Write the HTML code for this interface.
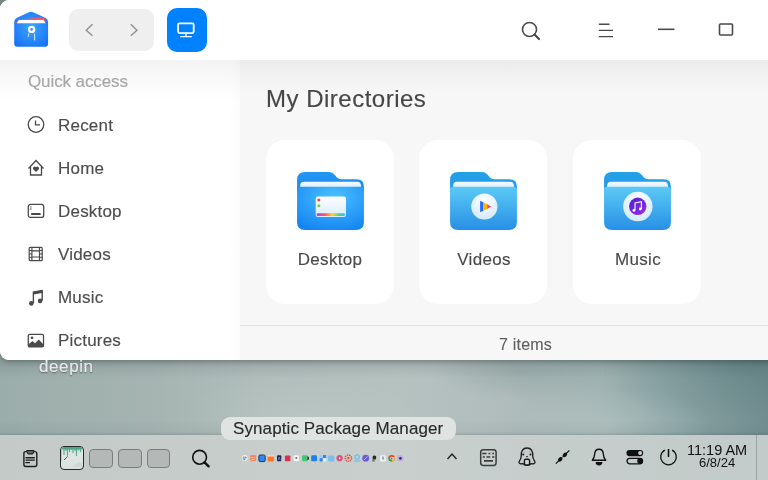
<!DOCTYPE html>
<html><head><meta charset="utf-8">
<style>
*{margin:0;padding:0;box-sizing:border-box}
html,body{width:768px;height:480px;overflow:hidden}
body{position:relative;font-family:"Liberation Sans",sans-serif;
background:
linear-gradient(180deg,rgba(40,60,60,.3) 0,rgba(40,60,60,.12) 365px,rgba(40,60,60,0) 378px,rgba(40,60,60,0) 420px,rgba(40,60,60,.06) 434px) ,
radial-gradient(ellipse 150px 55px at 745px 370px,rgba(80,115,118,.35),rgba(80,115,118,0)),
radial-gradient(ellipse 90px 28px at 520px 372px,rgba(90,120,122,.22),rgba(90,120,122,0)),
radial-gradient(ellipse 100px 40px at 610px 425px,rgba(230,240,238,.2),rgba(230,240,238,0)),
radial-gradient(ellipse 120px 40px at 300px 415px,rgba(230,240,238,.12),rgba(230,240,238,0)),
linear-gradient(90deg,#9badaa 0,#a5b4b1 150px,#b0bdbb 260px,#b6c2c0 400px,#b0bdbc 500px,#a0b3b2 600px,#8aa3a4 680px,#728e90 768px);}
.abs{position:absolute}
svg{position:absolute;overflow:visible}
#win{position:absolute;left:0;top:0;width:790px;height:360px;background:#fff;border-radius:9px;overflow:hidden;box-shadow:0 2px 5px rgba(0,0,0,.28)}
#title{position:absolute;left:0;top:0;width:790px;height:60px;background:#fff}
#side{position:absolute;left:0;top:60px;width:240px;height:300px;background:linear-gradient(90deg,rgba(0,0,0,0) 228px,rgba(0,0,0,.012) 240px),linear-gradient(180deg,#f3f3f3 0,#f9f9f9 18px,#fdfdfd 32px,#fff 46px)}
#main{position:absolute;left:240px;top:60px;width:550px;height:300px;background:linear-gradient(180deg,#ececec 0,#f5f5f5 25px,#f7f7f7 40px)}
.txt{position:absolute;white-space:nowrap;line-height:1;will-change:transform}
.lb{position:absolute;will-change:transform;-webkit-text-stroke:.15px currentColor;left:58px;font-size:17px;color:#4d4d4d;letter-spacing:.2px;line-height:1;white-space:nowrap}
.card{position:absolute;width:128px;height:164px;background:#fff;border-radius:19px}
.card .nm{position:absolute;will-change:transform;-webkit-text-stroke:.15px currentColor;left:.8px;width:128px;text-align:center;top:110.5px;font-size:17px;color:#4a4a4a;line-height:1;letter-spacing:.3px}
#dock{position:absolute;left:0;top:435px;width:768px;height:45px;box-shadow:0 -1px 2px rgba(40,60,60,.18);background:linear-gradient(90deg,#c3cac8,#c8cfcd 50%,#c3cbca)}
.ws{position:absolute;top:449px;width:23.5px;height:18.5px;border:1.6px solid #7a7f7e;border-radius:4px;background:#b4b9b8}
.di{position:absolute;top:454.5px;width:8px;height:8px;border-radius:2px}
</style></head><body>
<svg width="0" height="0" style="position:absolute">
<defs>
<radialGradient id="fd1" cx="0.55" cy="0.25" r="0.8"><stop offset="0" stop-color="#4cc2ff"/><stop offset="0.6" stop-color="#2a9cf8"/><stop offset="1" stop-color="#1586f0"/></radialGradient>
<linearGradient id="fv1" x1="0" y1="0" x2="0" y2="1"><stop offset="0" stop-color="#5ccaf5"/><stop offset="1" stop-color="#2790e6"/></linearGradient>
<linearGradient id="tb1" x1="0" y1="0" x2="0" y2="1"><stop offset="0" stop-color="#2596f2"/><stop offset="1" stop-color="#1a8aee"/></linearGradient>
<linearGradient id="tb2" x1="0" y1="0" x2="0" y2="1"><stop offset="0" stop-color="#22a0e8"/><stop offset="1" stop-color="#2a9be6"/></linearGradient>
<linearGradient id="pp" x1="0" y1="0" x2="0" y2="1"><stop offset="0" stop-color="#f4fbff"/><stop offset="1" stop-color="#cfeaff"/></linearGradient>
<linearGradient id="win" x1="0" y1="0" x2="0" y2="1"><stop offset="0" stop-color="#ffffff"/><stop offset="1" stop-color="#d7ebff"/></linearGradient>
<linearGradient id="rb" x1="0" y1="0" x2="1" y2="0"><stop offset="0" stop-color="#a63cff"/><stop offset="0.3" stop-color="#ff5a5a"/><stop offset="0.55" stop-color="#ffd21a"/><stop offset="0.8" stop-color="#4fd27a"/><stop offset="1" stop-color="#3cb5ff"/></linearGradient>
<radialGradient id="cw" cx="0.5" cy="0.3" r="0.7"><stop offset="0" stop-color="#ffffff"/><stop offset="1" stop-color="#d3e9fb"/></radialGradient>
<linearGradient id="pu" x1="0" y1="0" x2="1" y2="1"><stop offset="0" stop-color="#4a1ed6"/><stop offset="1" stop-color="#9a2ee8"/></linearGradient>
</defs></svg>
<div id="win">
  <div id="title">
    <!-- app icon -->
    <svg style="left:0;top:0" width="60" height="60" viewBox="0 0 60 60">
      <defs><radialGradient id="ag" cx="0.5" cy="0.45" r="0.65"><stop offset="0" stop-color="#3aa6ff"/><stop offset="1" stop-color="#1872f6"/></radialGradient></defs>
      <path d="M14.2 22 Q14.2 19 17 17.8 L29 12.3 Q31 11.4 33 12.3 L45.3 17.8 Q48.1 19 48.1 22 V43.8 Q48.1 46.8 45.1 46.8 H17.2 Q14.2 46.8 14.2 43.8 Z" fill="url(#ag)"/>
      <path d="M16.2 23 L18.5 19.8 L42.5 17.3 Q44 17.2 44.5 18.5 L45.8 23 Z" fill="#ff5470"/>
      <path d="M16.8 23.2 L18.8 20 H43.4 L45.6 23.2 Z" fill="#ffffff"/>
      <circle cx="31.6" cy="29.4" r="3.7" fill="#fff"/><circle cx="31.6" cy="29.4" r="1.3" fill="#2a8cff"/>
      <path d="M28.6 33.6 V36.8 M34.6 33.6 V40.4" stroke="#e8f2ff" stroke-width="0.9" fill="none"/>
    </svg>
    <div class="abs" style="left:69px;top:9px;width:85px;height:42px;background:#efefef;border-radius:9px"></div>
    <svg style="left:83px;top:21px" width="12" height="18" viewBox="0 0 12 18"><path d="M9.5 3.3 L3.2 9.2 L9.5 14.8" stroke="#8f8f8f" stroke-width="1.4" fill="none"/></svg>
    <svg style="left:127px;top:21px" width="12" height="18" viewBox="0 0 12 18"><path d="M3.8 3.3 L10 9.2 L3.8 14.8" stroke="#8f8f8f" stroke-width="1.4" fill="none"/></svg>
    <div class="abs" style="left:167px;top:8px;width:39.5px;height:43.5px;background:#0081ff;border-radius:10px"></div>
    <svg style="left:176px;top:20px" width="20" height="18" viewBox="0 0 20 18">
      <rect x="2.1" y="3.3" width="15.6" height="9.8" rx="1.5" stroke="#fff" stroke-width="1.8" fill="none"/>
      <path d="M10 13 V16 M4.2 16.6 H15.8" stroke="#fff" stroke-width="1.4"/>
    </svg>
    <svg style="left:520px;top:20px" width="22" height="22" viewBox="0 0 22 22"><circle cx="9.5" cy="9.5" r="7" stroke="#4a4a4a" stroke-width="1.6" fill="none"/><path d="M14.5 14.5 L19 19" stroke="#4a4a4a" stroke-width="2.2" stroke-linecap="round"/></svg>
    <svg style="left:596px;top:22px" width="18" height="18" viewBox="0 0 18 18"><path d="M2.8 2.3 H13.5 M2.8 8.4 H17 M2.8 14.6 H17" stroke="#4a4a4a" stroke-width="1.4"/></svg>
    <svg style="left:656px;top:22px" width="20" height="16" viewBox="0 0 20 16"><path d="M2 7.3 H18.4" stroke="#4a4a4a" stroke-width="1.6"/></svg>
    <svg style="left:718px;top:22px" width="18" height="16" viewBox="0 0 18 16"><rect x="1.5" y="2" width="13" height="11" rx="1" stroke="#4a4a4a" stroke-width="1.6" fill="none"/></svg>
  </div>
  <div id="side">
    <div class="txt" style="left:28px;top:13px;font-size:17px;color:#a6a6a6;letter-spacing:-.1px;-webkit-text-stroke:.15px currentColor">Quick access</div>
    <!-- clock -->
    <svg style="left:27px;top:56px" width="18" height="18" viewBox="0 0 18 18"><circle cx="9" cy="8.5" r="7.8" stroke="#4a4a4a" stroke-width="1.3" fill="none"/><path d="M8.5 4.5 V8.8 H13" stroke="#4a4a4a" stroke-width="1.3" fill="none"/></svg>
    <div class="lb" style="top:57px">Recent</div>
    <!-- home -->
    <svg style="left:27px;top:99px" width="18" height="18" viewBox="0 0 18 18"><path d="M1.5 9.5 L9 1.5 L16.5 9.5 M3.5 8 V16 H14.5 V8" stroke="#4a4a4a" stroke-width="1.3" fill="none" stroke-linejoin="miter"/><path d="M9 13 L6.2 10.3 a1.6 1.6 0 0 1 2.8 -2 a1.6 1.6 0 0 1 2.8 2 Z" fill="#4a4a4a"/></svg>
    <div class="lb" style="top:100px">Home</div>
    <!-- desktop -->
    <svg style="left:27px;top:143px" width="18" height="16" viewBox="0 0 18 16"><rect x="1.3" y="1.4" width="15.4" height="13" rx="2.2" stroke="#4a4a4a" stroke-width="1.3" fill="none"/><path d="M4.2 11 H13.6" stroke="#4a4a4a" stroke-width="1.8"/><circle cx="3.9" cy="3.9" r=".7" fill="#4a4a4a"/><circle cx="3.9" cy="6" r=".7" fill="#4a4a4a"/></svg>
    <div class="lb" style="top:143px">Desktop</div>
    <!-- videos -->
    <svg style="left:28px;top:186px" width="16" height="16" viewBox="0 0 16 16"><rect x="1.2" y="1.3" width="13" height="13.4" rx="1" stroke="#4a4a4a" stroke-width="1.2" fill="none"/><path d="M3.9 1 V15 M11.5 1 V15 M3.9 4.9 H11.5 M3.9 11 H11.5" stroke="#4a4a4a" stroke-width="1.2"/><path d="M1 4.5 H3.9 M1 7.9 H3.9 M1 11.3 H3.9 M11.5 4.5 H14.5 M11.5 7.9 H14.5 M11.5 11.3 H14.5" stroke="#4a4a4a" stroke-width="1"/></svg>
    <div class="lb" style="top:186px">Videos</div>
    <!-- music -->
    <svg style="left:28px;top:229px" width="16" height="18" viewBox="0 0 16 18"><path d="M5.4 14 V3 L14.2 1.5 V11.5" stroke="#4a4a4a" stroke-width="1.4" fill="none"/><path d="M5.4 2.8 L14.2 1.3 V4 L5.4 5.5 Z" fill="#4a4a4a"/><circle cx="3.3" cy="14.4" r="2.3" fill="#4a4a4a"/><circle cx="12.1" cy="11.9" r="2.3" fill="#4a4a4a"/></svg>
    <div class="lb" style="top:229px">Music</div>
    <!-- pictures -->
    <svg style="left:27px;top:273px" width="18" height="16" viewBox="0 0 18 16"><rect x="1.3" y="1.3" width="15.2" height="12.6" rx="1.5" stroke="#4a4a4a" stroke-width="1.3" fill="none"/><circle cx="5" cy="4.8" r="1.4" fill="#4a4a4a"/><path d="M1.3 13.9 V11.5 L5.5 8 L8 10.3 L11.8 6.5 L16.5 11.5 V13.9 Z" fill="#4a4a4a"/></svg>
    <div class="lb" style="top:272px">Pictures</div>
  </div>
  <div id="main">
    <div class="txt" style="left:25.5px;top:27.3px;font-size:24px;color:#474747;letter-spacing:.5px;-webkit-text-stroke:.15px currentColor">My Directories</div>
    <div class="card" style="left:25.5px;top:80px"><svg style="left:31px;top:31.6px" width="67" height="58" viewBox="0 0 66.3 57.5"><path d="M0 8 Q0 0 8 0 H32 Q35 0 37.5 3 L39.5 5.5 Q41 7.2 44 7.2 H59 Q66.3 7.2 66.3 14.5 V20 H0 Z" fill="url(#tb1)"/>
<path d="M3 14 Q3 9.7 7 9.7 H59.5 Q63.4 9.7 63.4 14 V18 H3 Z" fill="url(#pp)"/>
<path d="M0 17 Q0 14.5 3 14.5 H63.3 Q66.3 14.5 66.3 17 V49.5 Q66.3 57.5 58.3 57.5 H8 Q0 57.5 0 49.5 Z" fill="url(#fd1)"/>
<rect x="18.5" y="24.3" width="30" height="20.4" rx="2" fill="url(#win)"/>
<circle cx="21.6" cy="27.8" r="1.5" fill="#f0445a"/><circle cx="21.6" cy="33.4" r="1.5" fill="#7ccf3a"/>
<rect x="19.5" y="40.8" width="28" height="2.8" rx="1.2" fill="url(#rb)"/></svg><div class="nm">Desktop</div></div>
    <div class="card" style="left:179px;top:80px"><svg style="left:31px;top:31.6px" width="67" height="58" viewBox="0 0 66.3 57.5"><path d="M0 8 Q0 0 8 0 H32 Q35 0 37.5 3 L39.5 5.5 Q41 7.2 44 7.2 H59 Q66.3 7.2 66.3 14.5 V20 H0 Z" fill="url(#tb2)"/>
<path d="M3 14 Q3 9.7 7 9.7 H59.5 Q63.4 9.7 63.4 14 V18 H3 Z" fill="url(#pp)"/>
<path d="M0 17 Q0 14.5 3 14.5 H63.3 Q66.3 14.5 66.3 17 V49.5 Q66.3 57.5 58.3 57.5 H8 Q0 57.5 0 49.5 Z" fill="url(#fv1)"/>
<circle cx="34" cy="34.2" r="13" fill="url(#cw)"/>
<path d="M29.8 28.5 L33 30 V38.5 L29.8 40 Z" fill="#1f6dff"/>
<path d="M33 30 L36.8 32 V36.6 L33 38.5 Z" fill="#ffb400"/>
<path d="M36.8 32 L40.6 34.2 L36.8 36.6 Z" fill="#ff3a6a"/></svg><div class="nm">Videos</div></div>
    <div class="card" style="left:333px;top:80px"><svg style="left:31px;top:31.6px" width="67" height="58" viewBox="0 0 66.3 57.5"><path d="M0 8 Q0 0 8 0 H32 Q35 0 37.5 3 L39.5 5.5 Q41 7.2 44 7.2 H59 Q66.3 7.2 66.3 14.5 V20 H0 Z" fill="url(#tb2)"/>
<path d="M3 14 Q3 9.7 7 9.7 H59.5 Q63.4 9.7 63.4 14 V18 H3 Z" fill="url(#pp)"/>
<path d="M0 17 Q0 14.5 3 14.5 H63.3 Q66.3 14.5 66.3 17 V49.5 Q66.3 57.5 58.3 57.5 H8 Q0 57.5 0 49.5 Z" fill="url(#fv1)"/>
<circle cx="33.5" cy="34.2" r="14.6" fill="url(#cw)"/>
<circle cx="33.4" cy="34" r="8.6" fill="url(#pu)"/>
<path d="M30.7 38 V30.6 L37 29.5 V36.6" stroke="#fff" stroke-width="1.1" fill="none"/>
<circle cx="29.6" cy="38.1" r="1.4" fill="#fff"/><circle cx="35.9" cy="36.7" r="1.4" fill="#fff"/></svg><div class="nm">Music</div></div>
    <div class="abs" style="left:0;top:265px;width:550px;height:1px;background:#e2e2e2"></div>
    <div class="txt" style="left:259px;top:277px;font-size:16px;color:#5e5e5e;letter-spacing:.2px;-webkit-text-stroke:.1px currentColor">7 items</div>
  </div>
</div>
<div class="txt" style="left:38.5px;top:358px;font-size:17px;color:#e6eae9;letter-spacing:.6px;-webkit-text-stroke:.2px currentColor;text-shadow:0 1px 1.5px rgba(0,0,0,.45)">deepin</div>
<div id="dock"></div>
<div class="abs" style="left:756px;top:435px;width:1px;height:45px;background:#9ca5a4"></div>
<!-- clipboard -->
<svg style="left:22px;top:449px" width="17" height="19" viewBox="0 0 17 19"><path d="M4.5 2.6 H3.8 Q1.9 2.6 1.9 4.6 V15.6 Q1.9 17.5 3.9 17.5 H12.9 Q14.8 17.5 14.8 15.6 V4.6 Q14.8 2.6 12.8 2.6 H12.2" stroke="#1e1e1e" stroke-width="1.4" fill="none"/><path d="M4.6 2.2 Q4.6 1.6 5.3 1.6 H11.4 Q12.1 1.6 12.1 2.2 L10.9 4.4 Q10.6 4.9 10 4.9 H6.7 Q6.1 4.9 5.8 4.4 Z" fill="#6d7170" stroke="#1e1e1e" stroke-width="1.1"/><rect x="3.6" y="8.6" width="9.2" height="2.6" fill="#8d9291"/><path d="M3.6 8.6 H12.8 M3.6 11.2 H12.8" stroke="#1e1e1e" stroke-width="1.1"/><path d="M3.8 13.6 H7.5" stroke="#1e1e1e" stroke-width="1.2" stroke-linecap="round"/></svg>
<!-- workspaces -->
<div class="abs" style="left:60px;top:446px;width:24px;height:23.5px;border:1.8px solid #262a29;border-radius:4px;background:linear-gradient(180deg,#cfe0da 0,#dfe6e3 40%,#d9e0dd 100%);overflow:hidden">
<svg style="left:0;top:0" width="21" height="20" viewBox="0 0 21 20"><path d="M0 0 H21 V2.5 H0 Z" fill="#5aae92"/><path d="M3 0 V8 M5 0 V4 M6.5 0 V10 M8.5 0 V5 M10 0 V3 M12 0 V6 M14 0 V4 M15.5 0 V9 M17.5 0 V3.5 M19.5 0 V5" stroke="#3f9d7c" stroke-width="1.1" opacity=".8"/><path d="M0 0 V14" stroke="#8cc3b0" stroke-width="2" opacity=".6"/><path d="M3 13 L6 10" stroke="#333" stroke-width=".8"/><path d="M12 20 Q16 14 21 16 V20 Z" fill="#c8d6d1" opacity=".7"/></svg></div>
<div class="ws" style="left:89px"></div>
<div class="ws" style="left:118px"></div>
<div class="ws" style="left:146.5px"></div>
<!-- search -->
<svg style="left:190px;top:448px" width="22" height="22" viewBox="0 0 22 22"><circle cx="9.6" cy="9.3" r="6.9" stroke="#111" stroke-width="1.6" fill="none"/><path d="M14.6 14.3 L18.6 18.3" stroke="#111" stroke-width="2.4" stroke-linecap="round"/></svg>
<!-- dock apps -->
<svg style="left:0;top:0" width="768" height="480" viewBox="0 0 768 480">
<circle cx="244.6" cy="458" r="2.9" fill="#f3f3f3"/><circle cx="243.6" cy="457.3" r="1" fill="#ff7a8a"/><circle cx="245.6" cy="457.6" r="1" fill="#b060ff"/><circle cx="244.3" cy="459.2" r="1" fill="#3a8cff"/><circle cx="243.3" cy="458.6" r=".8" fill="#6ad06a"/>
<rect x="250.1" y="455.1" width="6" height="6.1" rx="1.4" fill="#f8845e"/><path d="M251.3 457.6 h1.3 M253.6 457.6 h1.3 M251.5 459.4 h3.3" stroke="#ffe8dd" stroke-width=".7"/>
<rect x="258.9" y="455" width="6.3" height="6.6" rx="1.3" fill="#2a8af8" stroke="#1e2640" stroke-width=".9"/><rect x="263" y="455.6" width="1.6" height=".8" fill="#ff5a7a"/>
<rect x="267.7" y="455.2" width="6.2" height="6.2" rx="1" fill="#ff7520"/><rect x="267.7" y="455.2" width="6.2" height="1.3" fill="#f4e8e0"/>
<rect x="277" y="455.2" width="4.3" height="6" rx="1" fill="#1c2450"/><path d="M278.2 460 L279.2 457 L280.2 460" stroke="#8fb0ff" stroke-width=".6" fill="none"/>
<rect x="284.9" y="455.6" width="5.5" height="5.6" rx="1" fill="#de304c"/>
<rect x="293.6" y="455.2" width="5.5" height="6" rx="1.2" fill="#f4f4f4"/><circle cx="296.3" cy="458" r="1" fill="#6a6a7a"/>
<circle cx="307" cy="458.2" r="2" fill="#222"/><rect x="302" y="455.2" width="5.5" height="6" rx="1.3" fill="#44c878"/>
<rect x="311.2" y="455.2" width="5.8" height="6" rx="1.3" fill="#1e80f0"/>
<rect x="319.6" y="455" width="3.2" height="3.2" fill="#9ad0ff"/><rect x="322.9" y="455" width="3.2" height="3.2" fill="#2a88f5"/><rect x="319.6" y="458.2" width="3.2" height="3.2" fill="#2a88f5"/><rect x="322.9" y="458.2" width="3.2" height="3.2" fill="#e8f4ff"/>
<rect x="328.1" y="455.6" width="6.2" height="5.8" rx="1.2" fill="#78bff0"/>
<circle cx="339.6" cy="458.2" r="3.1" fill="#de5080"/><path d="M339 456.9 L340.9 458.2 L339 459.5 Z" fill="#fff"/>
<circle cx="348.4" cy="458.2" r="3.2" fill="none" stroke="#e8492e" stroke-width="1.4" stroke-dasharray="1.4 .8"/><circle cx="348.4" cy="458.2" r="1.1" fill="#e8492e"/>
<circle cx="357.1" cy="457" r="2.2" fill="none" stroke="#5bbcf0" stroke-width="1.1"/><path d="M353.5 461 H360.8" stroke="#5bbcf0" stroke-width="1"/>
<circle cx="365.7" cy="458.2" r="3.4" fill="#6a5ad8"/><path d="M364 459.8 L367.5 456.5" stroke="#c8c0ff" stroke-width=".8"/>
<rect x="372.6" y="455.5" width="3.6" height="4" rx="1.5" fill="#2a2a2a"/><rect x="372.3" y="459" width="2.5" height="2.6" fill="#777"/>
<rect x="380.1" y="455.2" width="5.9" height="6.2" rx="1" fill="#eef0f1"/><rect x="382" y="456.6" width="2.2" height="3" fill="#9aa8b0"/>
<circle cx="391.7" cy="458.2" r="3.3" fill="#e44434"/><path d="M391.7 458.2 L394.56 456.55 A3.3 3.3 0 0 1 391.7 461.5 Z" fill="#f8c21a"/><path d="M391.7 458.2 L391.7 461.5 A3.3 3.3 0 0 1 388.84 456.55 Z" fill="#2ea44f"/><circle cx="391.7" cy="458.2" r="1.4" fill="#fff"/><circle cx="391.7" cy="458.2" r="1" fill="#3a7cf0"/>
<circle cx="400.4" cy="458.3" r="3.3" fill="#c0b0e6"/><circle cx="400.4" cy="458.3" r="1.4" fill="#3a3060"/>
</svg>
<!-- tray -->
<svg style="left:445px;top:451px" width="14" height="10" viewBox="0 0 14 10"><path d="M2.5 8 L7 3 L11.5 8" stroke="#222" stroke-width="1.4" fill="none"/></svg>
<svg style="left:479px;top:448px" width="19" height="19" viewBox="0 0 19 19"><rect x="1.7" y="1.7" width="15.4" height="15.7" rx="2.6" stroke="#3c3c3c" stroke-width="1.5" fill="none"/><path d="M3.2 5.5 H7.5 M9.5 5.5 H11.3 M13.2 5.5 H15 M3.8 9 H5.8 M7.5 9 H11.2 M13.1 9 H15.4 M5 12.8 H14" stroke="#3c3c3c" stroke-width="1.7"/></svg>
<svg style="left:517px;top:447px" width="20" height="20" viewBox="0 0 20 20"><path d="M4.2 9.5 Q3.8 1 10 1 Q16.2 1 15.8 9.5 Q16 12 17.6 14 Q18.8 16.3 16.5 16.8 L14 16.6 Q13 18.3 10 18.3 Q7 18.3 6 16.6 L3.5 16.8 Q1.2 16.3 2.4 14 Q4 12 4.2 9.5 Z" stroke="#1a1a1a" stroke-width="1.3" fill="none" stroke-linejoin="round"/>
<rect x="7.4" y="12.3" width="5.2" height="5.6" rx="1.6" stroke="#1a1a1a" stroke-width="1.4" fill="#d0d6d4"/><circle cx="6.2" cy="7.6" r="1" fill="#1a1a1a"/><circle cx="13.5" cy="7.6" r="1" fill="#1a1a1a"/><path d="M9 9.6 H11" stroke="#3a3a3a" stroke-width="1"/><path d="M7 3.5 Q7.5 5 7 6.5 M13 3.5 Q12.5 5 13 6.5" stroke="#9aa09f" stroke-width=".6" fill="none"/></svg>
<svg style="left:554px;top:449px" width="17" height="16" viewBox="0 0 17 16"><path d="M1.8 14.6 L15.4 1.4" stroke="#111" stroke-width="1.3"/><ellipse cx="6.2" cy="10.3" rx="2.5" ry="1.9" transform="rotate(-44 6.2 10.3)" fill="#111"/><ellipse cx="10.9" cy="5.8" rx="2.5" ry="1.9" transform="rotate(-44 10.9 5.8)" fill="#111"/><path d="M7.9 8.6 L9.1 7.5" stroke="#c8cfcd" stroke-width="0.9"/></svg>
<svg style="left:590px;top:448px" width="18" height="19" viewBox="0 0 18 19"><path d="M2.3 12.2 Q4.4 10 4.7 6 Q5 1.3 9 1.3 Q13 1.3 13.3 6 Q13.6 10 15.7 12.2 Z" stroke="#111" stroke-width="1.4" fill="none" stroke-linejoin="round"/><path d="M5.6 14 H12.4 A3.4 3.4 0 0 1 5.6 14 Z" fill="#111"/></svg>
<svg style="left:625px;top:449px" width="20" height="17" viewBox="0 0 20 17"><rect x="1.4" y="1" width="16.8" height="6.2" rx="3.1" fill="#111"/><circle cx="15.1" cy="4.1" r="2" fill="#c8cfcd"/><rect x="2" y="9.3" width="15.6" height="5.6" rx="2.8" stroke="#111" stroke-width="1.3" fill="none"/><circle cx="15" cy="12.1" r="2.8" fill="#111"/></svg>
<svg style="left:659px;top:448px" width="19" height="19" viewBox="0 0 19 19"><path d="M5.84 2.11 A7.8 7.8 0 1 0 13.16 2.11" stroke="#111" stroke-width="1.3" fill="none"/><path d="M9.5 1 V8.9" stroke="#111" stroke-width="1.6"/></svg>
<div class="txt" style="left:687px;top:443px;font-size:14.5px;color:#111">11:19 AM</div>
<div class="txt" style="left:699px;top:456px;font-size:13px;color:#111">6/8/24</div>
<div class="abs" style="left:221px;top:416.8px;width:234.5px;height:23.2px;background:#dfe4e3;border-radius:9px"></div>
<div class="txt" style="left:232.5px;top:420px;font-size:17px;color:#2a2a2a;letter-spacing:.1px;-webkit-text-stroke:.15px currentColor">Synaptic Package Manager</div>
</body></html>
